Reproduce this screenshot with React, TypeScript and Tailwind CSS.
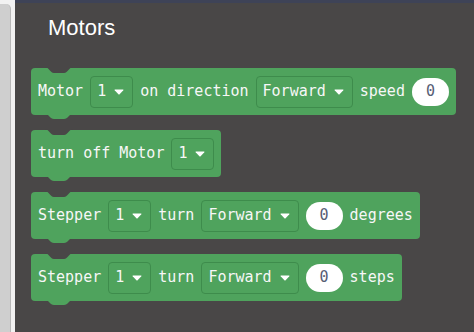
import React from "react";

const GREEN = "#4fa35d";

function Caret() {
  return (
    <svg width="10" height="6" viewBox="0 0 10 6" className="shrink-0">
      <path d="M1 0.5 H9 Q9.8 0.5 9.3 1.2 L5.6 5.2 Q5 5.8 4.4 5.2 L0.7 1.2 Q0.2 0.5 1 0.5 Z" fill="#ffffff" />
    </svg>
  );
}

function Dropdown({ label }: { label: string }) {
  return (
    <div className="flex h-[32px] items-center gap-[8px] rounded-[4px] border border-[#3e8c4c] pl-[6px] pr-[8px]">
      <span>{label}</span>
      <Caret />
    </div>
  );
}

function NumberPill({ value }: { value: string }) {
  return (
    <div className="flex h-[28px] w-[37px] items-center justify-center rounded-full bg-white text-[#575e75]">
      {value}
    </div>
  );
}

type Part = string | { dd: string } | { num: string };

function Block({ parts }: { parts: Part[] }) {
  return (
    <div
      className="relative flex h-[47px] w-fit items-center gap-[7px] rounded-[4px] px-[7px] text-[15px] text-[#f7f7f7]"
      style={{ backgroundColor: GREEN, fontFamily: '"DejaVu Sans Mono", monospace' }}
    >
      {/* notch cut into the top edge */}
      <svg width="28" height="6" viewBox="0 0 28 6" className="absolute left-[14px] top-[-1px]">
        <path d="M0 0 C4 0 5 6 9 6 L19 6 C23 6 24 0 28 0 Z" fill="#494747" />
      </svg>
      {/* tab below the bottom edge */}
      <svg width="28" height="6" viewBox="0 0 28 6" className="absolute bottom-[-5px] left-[14px]">
        <path d="M0 0 C4 0 5 5 9 5 L19 5 C23 5 24 0 28 0 Z" fill={GREEN} />
      </svg>
      {parts.map((p, i) =>
        typeof p === "string" ? (
          <span key={i} className="whitespace-pre">
            {p}
          </span>
        ) : "dd" in p ? (
          <Dropdown key={i} label={p.dd} />
        ) : (
          <NumberPill key={i} value={p.num} />
        )
      )}
    </div>
  );
}

export default function App() {
  return (
    <div className="flex h-[332px] w-[474px] overflow-hidden bg-[#494747]">
      {/* left scroll strip */}
      <div className="flex w-[15px] shrink-0 bg-[#f2f2f2] pr-[4px] pt-[4px]">
        <div className="w-full rounded-tr-[5px] border-r border-[#b9b9b9] bg-[#cfcfcf]" />
      </div>

      <div className="flex flex-1 flex-col">
        <div className="h-[3px] bg-[#3e4357]" />

        {/* Header */}
        <div
          className="pl-[33px] pt-[13px] text-[22px] leading-[24px] text-white"
          style={{ fontFamily: '"Liberation Sans", Arial, sans-serif' }}
        >
          Motors
        </div>

        {/* Blocks */}
        <div className="flex flex-col gap-[15px] pl-[16px] pt-[28px]">
          <Block parts={["Motor", { dd: "1" }, "on direction", { dd: "Forward" }, "speed", { num: "0" }]} />
          <Block parts={["turn off Motor", { dd: "1" }]} />
          <Block parts={["Stepper", { dd: "1" }, "turn", { dd: "Forward" }, { num: "0" }, "degrees"]} />
          <Block parts={["Stepper", { dd: "1" }, "turn", { dd: "Forward" }, { num: "0" }, "steps"]} />
        </div>
      </div>
    </div>
  );
}
